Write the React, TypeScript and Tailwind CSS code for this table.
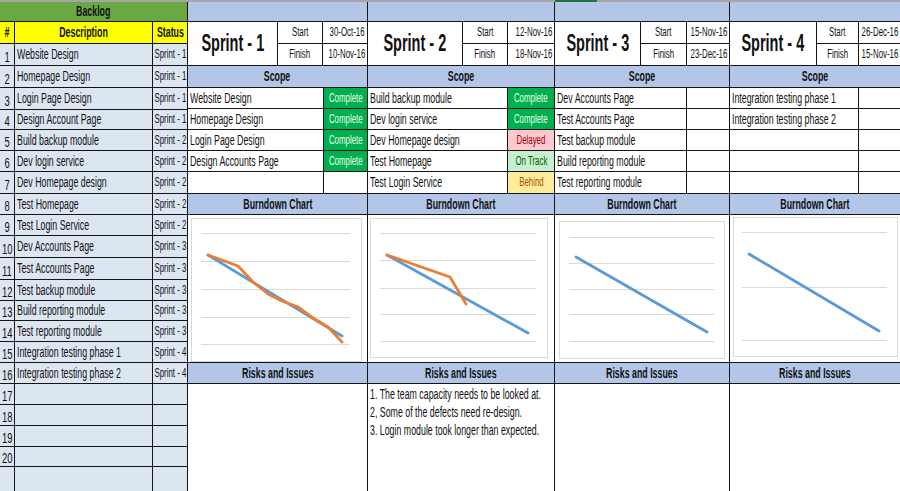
import React from "react";

type Status = "Complete" | "Delayed" | "On Track" | "Behind" | "";

type ScopeRow = { task: string; status: Status };

type Chart = {
  frame: [number, number, number, number];
  grid: number[];
  gx: [number, number];
  ideal: [number, number][];
  actual?: [number, number][];
};

type Sprint = {
  name: string;
  start: string;
  finish: string;
  width: string;
  titleW: string;
  labelW: string;
  descW: string;
  last?: boolean;
  scope: ScopeRow[];
  chart: Chart;
  risks: string[];
};

const FONT = "font-['Liberation_Sans',Arial,sans-serif]";
const LINE = "border-[#141414]";
const FIX = "shrink-0 min-w-0";
const FILL = "flex-1 min-w-0";

// the sheet uses a narrow face; squeeze Liberation Sans to match it
function N({ children, origin = "origin-left" }: { children: React.ReactNode; origin?: string }) {
  return <span className={`inline-block shrink-0 whitespace-nowrap scale-x-[0.63] ${origin}`}>{children}</span>;
}

const BACKLOG: { task: string; sprint: string; h: string }[] = [
  { task: "Website Design",              sprint: "Sprint - 1", h: "h-[22px]" },
  { task: "Homepage Design",             sprint: "Sprint - 1", h: "h-[22px]" },
  { task: "Login Page Design",           sprint: "Sprint - 1", h: "h-[22px]" },
  { task: "Design Account Page",         sprint: "Sprint - 1", h: "h-[20px]" },
  { task: "Build backup module",         sprint: "Sprint - 2", h: "h-[21px]" },
  { task: "Dev login service",           sprint: "Sprint - 2", h: "h-[21px]" },
  { task: "Dev Homepage design",         sprint: "Sprint - 2", h: "h-[22px]" },
  { task: "Test Homepage",               sprint: "Sprint - 2", h: "h-[21px]" },
  { task: "Test Login Service",          sprint: "Sprint - 2", h: "h-[21px]" },
  { task: "Dev Accounts Page",           sprint: "Sprint - 3", h: "h-[22px]" },
  { task: "Test Accounts Page",          sprint: "Sprint - 3", h: "h-[22px]" },
  { task: "Test backup module",          sprint: "Sprint - 3", h: "h-[21px]" },
  { task: "Build reporting module",      sprint: "Sprint - 3", h: "h-[20px]" },
  { task: "Test reporting module",       sprint: "Sprint - 3", h: "h-[21px]" },
  { task: "Integration testing phase 1", sprint: "Sprint - 4", h: "h-[21px]" },
  { task: "Integration testing phase 2", sprint: "Sprint - 4", h: "h-[21px]" },
  { task: "",                            sprint: "",           h: "h-[21px]" },
  { task: "",                            sprint: "",           h: "h-[21px]" },
  { task: "",                            sprint: "",           h: "h-[21px]" },
  { task: "",                            sprint: "",           h: "h-[20px]" },
];

const SPRINTS: Sprint[] = [
  {
    name: "Sprint - 1", start: "30-Oct-16", finish: "10-Nov-16",
    width: "w-[180px]", titleW: "w-[90px]", labelW: "w-[45px]", descW: "w-[136px]",
    scope: [
      { task: "Website Design",       status: "Complete" },
      { task: "Homepage Design",      status: "Complete" },
      { task: "Login Page Design",    status: "Complete" },
      { task: "Design Accounts Page", status: "Complete" },
      { task: "",                     status: "" },
    ],
    chart: {
      frame: [3, 3, 170, 143],
      grid: [18, 46, 74, 102, 129],
      gx: [13, 162],
      ideal: [[20, 40], [154, 121]],
      actual: [[20, 40], [50, 51], [65, 67], [80, 79], [94, 86], [110, 92], [125, 103], [140, 112], [154, 127]],
    },
    risks: [],
  },
  {
    name: "Sprint - 2", start: "12-Nov-16", finish: "18-Nov-16",
    width: "w-[187px]", titleW: "w-[95px]", labelW: "w-[45px]", descW: "w-[140px]",
    scope: [
      { task: "Build backup module", status: "Complete" },
      { task: "Dev login service",   status: "Complete" },
      { task: "Dev Homepage design", status: "Delayed" },
      { task: "Test Homepage",       status: "On Track" },
      { task: "Test Login Service",  status: "Behind" },
    ],
    chart: {
      frame: [2, 3, 177, 139],
      grid: [18, 45, 73, 99, 126],
      gx: [12, 168],
      ideal: [[19, 40], [160, 118]],
      actual: [[19, 40], [82, 62], [98, 89]],
    },
    risks: [
      "1. The team capacity needs to be looked at.",
      "2, Some of the defects need re-design.",
      "3. Login module took longer than expected.",
    ],
  },
  {
    name: "Sprint - 3", start: "15-Nov-16", finish: "23-Dec-16",
    width: "w-[175px]", titleW: "w-[86px]", labelW: "w-[46px]", descW: "w-[132px]",
    scope: [
      { task: "Dev Accounts Page",      status: "" },
      { task: "Test Accounts Page",     status: "" },
      { task: "Test backup module",     status: "" },
      { task: "Build reporting module", status: "" },
      { task: "Test reporting module",  status: "" },
    ],
    chart: {
      frame: [4, 6, 165, 137],
      grid: [22, 48, 74, 99, 126],
      gx: [14, 159],
      ideal: [[21, 42], [152, 117]],
    },
    risks: [],
  },
  {
    name: "Sprint - 4", start: "26-Dec-16", finish: "15-Nov-16",
    width: "w-[170px]", titleW: "w-[87px]", labelW: "w-[42px]", descW: "w-[129px]", last: true,
    scope: [
      { task: "Integration testing phase 1", status: "" },
      { task: "Integration testing phase 2", status: "" },
      { task: "", status: "" },
      { task: "", status: "" },
      { task: "", status: "" },
    ],
    chart: {
      frame: [3, 2, 164, 139],
      grid: [17, 72, 125],
      gx: [12, 157],
      ideal: [[19, 39], [149, 116]],
    },
    risks: [],
  },
];

const STATUS_STYLE: Record<string, string> = {
  "Complete": "bg-[#00b050] text-[#e8ffe8]",
  "Delayed":  "bg-[#ffc7ce] text-[#9c0006]",
  "On Track": "bg-[#c6efce] text-[#006100]",
  "Behind":   "bg-[#ffeb9c] text-[#9c5700]",
  "":         "bg-white",
};

const SCOPE_H = ["h-[21px]", "h-[21px]", "h-[21px]", "h-[21px]", "h-[22px]"];

export default function App() {
  return (
    <div className={`w-[900px] h-[491px] overflow-hidden bg-white text-[#111] ${FONT}`}>
      {/* column header strip */}
      <div className="flex h-[2px] bg-[#a6a6a6]">
        <div className="w-[555px] shrink-0" />
        <div className="w-[42px] shrink-0 bg-[#217346]" />
      </div>

      <div className="flex">
        <Backlog />
        {SPRINTS.map((s) => <SprintColumn key={s.name} sprint={s} />)}
      </div>
    </div>
  );
}

function Backlog() {
  return (
    <div className={`w-[188px] ${FIX} flex flex-col border-r ${LINE}`}>
      <div className={`h-[20px] bg-[#6aa843] border-b ${LINE} flex items-center justify-center text-[14px] font-bold`}>
        <N origin="origin-center">Backlog</N>
      </div>
      <div className={`h-[22px] bg-[#ffff00] border-b ${LINE} flex text-[14px] font-bold`}>
        <div className={`w-[15px] ${FIX} border-r ${LINE} flex items-center justify-center`}><N origin="origin-center">#</N></div>
        <div className={`w-[138px] ${FIX} border-r ${LINE} flex items-center justify-center`}><N origin="origin-center">Description</N></div>
        <div className={`${FILL} flex items-center justify-center`}><N origin="origin-center">Status</N></div>
      </div>
      {BACKLOG.map((row, i) => (
        <div key={i} className={`${row.h} bg-[#dce6f1] border-b ${LINE} flex text-[14px]`}>
          <div className={`w-[15px] ${FIX} border-r ${LINE} flex items-end justify-center text-[15px] leading-[17px]`}>
            <N origin="origin-center">{i + 1}</N>
          </div>
          <div className={`w-[138px] ${FIX} border-r ${LINE} flex items-center pl-[2px]`}><N>{row.task}</N></div>
          <div className={`${FILL} flex items-center justify-center text-[12.5px]`}><N origin="origin-center">{row.sprint}</N></div>
        </div>
      ))}
      <div className="flex-1 bg-[#dce6f1] flex">
        <div className={`w-[15px] ${FIX} border-r ${LINE}`} />
        <div className={`w-[138px] ${FIX} border-r ${LINE}`} />
        <div className={FILL} />
      </div>
    </div>
  );
}

function BlueHeader({ label, h }: { label: string; h: string }) {
  return (
    <div className={`${h} shrink-0 bg-[#b4c6e7] border-b ${LINE} flex items-center justify-center text-[14px] font-bold`}>
      <N origin="origin-center">{label}</N>
    </div>
  );
}

function SprintColumn({ sprint }: { sprint: Sprint }) {
  return (
    <div className={`${sprint.width} ${FIX} h-[489px] flex flex-col ${sprint.last ? "" : `border-r ${LINE}`}`}>
      <div className={`h-[20px] shrink-0 bg-[#b4c6e7] border-b ${LINE}`} />

      {/* title + dates */}
      <div className={`h-[44px] shrink-0 flex border-b ${LINE}`}>
        <div className={`${sprint.titleW} ${FIX} border-r ${LINE} flex items-center justify-center text-[23px] font-bold`}>
          <N origin="origin-center">{sprint.name}</N>
        </div>
        <div className={`${FILL} flex flex-col text-[12.5px]`}>
          <div className={`flex-1 flex border-b ${LINE}`}>
            <div className={`${sprint.labelW} ${FIX} border-r ${LINE} flex items-center justify-center`}><N origin="origin-center">Start</N></div>
            <div className={`${FILL} flex items-center justify-end pr-[2px]`}><N origin="origin-right">{sprint.start}</N></div>
          </div>
          <div className="flex-1 flex">
            <div className={`${sprint.labelW} ${FIX} border-r ${LINE} flex items-center justify-center`}><N origin="origin-center">Finish</N></div>
            <div className={`${FILL} flex items-center justify-end pr-[2px]`}><N origin="origin-right">{sprint.finish}</N></div>
          </div>
        </div>
      </div>

      <BlueHeader label="Scope" h="h-[22px]" />
      {sprint.scope.map((row, i) => (
        <div key={i} className={`${SCOPE_H[i]} shrink-0 flex border-b ${LINE} text-[14px]`}>
          <div className={`${sprint.descW} ${FIX} border-r ${LINE} flex items-center pl-[2px]`}>
            <N>{row.task}</N>
          </div>
          <div className={`${FILL} flex items-center justify-center text-[12.5px] ${STATUS_STYLE[row.status]}`}>
            <N origin="origin-center">{row.status}</N>
          </div>
        </div>
      ))}

      <BlueHeader label="Burndown Chart" h="h-[21px]" />
      <div className={`h-[148px] shrink-0 border-b ${LINE}`}>
        <BurndownChart chart={sprint.chart} />
      </div>

      <BlueHeader label="Risks and Issues" h="h-[21px]" />
      <div className="flex-1 flex flex-col text-[14px] leading-[18px] pl-[2px] pt-[1px]">
        {sprint.risks.map((r) => <div key={r}><N>{r}</N></div>)}
      </div>
    </div>
  );
}

function BurndownChart({ chart }: { chart: Chart }) {
  const [fx, fy, fw, fh] = chart.frame;
  const pts = (p: [number, number][]) => p.map(([x, y]) => `${x},${y}`).join(" ");
  return (
    <svg width="100%" height="147" className="block">
      <rect x={fx + 0.5} y={fy + 0.5} width={fw} height={fh} fill="white" stroke="#d9d9d9" />
      {chart.grid.map((y) => (
        <line key={y} x1={chart.gx[0]} x2={chart.gx[1]} y1={y + 0.5} y2={y + 0.5} stroke="#d9d9d9" strokeWidth="1.2" />
      ))}
      <polyline points={pts(chart.ideal)} fill="none" stroke="#5b9bd5" strokeWidth="2.8" strokeLinecap="round" />
      {chart.actual && (
        <polyline points={pts(chart.actual)} fill="none" stroke="#ed7d31" strokeWidth="2.8" strokeLinejoin="round" strokeLinecap="round" />
      )}
    </svg>
  );
}
